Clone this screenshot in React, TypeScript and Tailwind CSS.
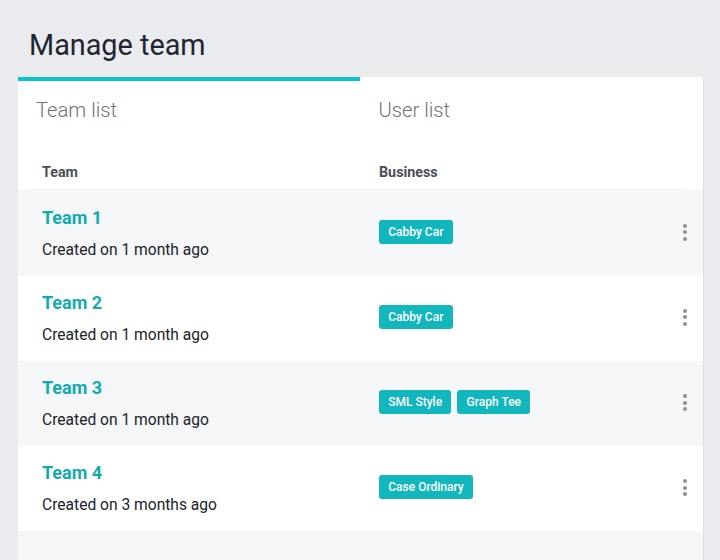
const teams = [
  { name: 'Team 1', created: 'Created on 1 month ago', tags: ['Cabby Car'] },
  { name: 'Team 2', created: 'Created on 1 month ago', tags: ['Cabby Car'] },
  { name: 'Team 3', created: 'Created on 1 month ago', tags: ['SML Style', 'Graph Tee'] },
  { name: 'Team 4', created: 'Created on 3 months ago', tags: ['Case Ordinary'] },
];

function Dots() {
  return (
    <div className="flex flex-col gap-[2.5px] -mt-[1px]">
      <span className="w-1 h-1 rounded-full bg-[#8e9196]" />
      <span className="w-1 h-1 rounded-full bg-[#8e9196]" />
      <span className="w-1 h-1 rounded-full bg-[#8e9196]" />
    </div>
  );
}

export default function App() {
  return (
    <div className="h-[560px] overflow-hidden bg-[#e9ebef] pl-[18px] pr-[17px] font-['Roboto',sans-serif]">
      <h1 className="h-[77px] pt-[26px] pl-[11px] text-[28.8px] leading-[38px] text-[#1f2530]">Manage team</h1>
      <div className="h-[483px] bg-[#f5f6f8] rounded-t-[3px] shadow-[1px_0_1px_rgba(0,0,0,0.06)]">
        <div className="bg-white rounded-t-[3px] h-[113px]">
          <div className="flex h-[73px]">
            <div className="w-[342px] h-[73px] border-t-[4.5px] border-[#0bc2c9] pt-[15px] pl-[18px] text-[20.2px] leading-[28px] font-light text-[#6f7276]">Team list</div>
            <div className="pt-[19px] pl-[18.5px] text-[20.2px] leading-[28px] font-light text-[#6f7276]">User list</div>
          </div>
          <div className="flex h-[40px] ml-[12px] mr-[18px] border-b border-[#f0f1f3] text-[14.3px] font-bold leading-[44px] text-[#4a4e55]">
            <div className="w-[349px] pl-[12px]">Team</div>
            <div>Business</div>
          </div>
        </div>
        {teams.map((team, i) => (
          <div key={team.name} className={`flex items-center h-[85.25px] pl-[24px] pr-[16px] ${i % 2 === 0 ? 'bg-[#f5f6f8]' : 'bg-white'}`}>
            <div className="w-[337px]">
              <div className="-mt-[1px] text-lg leading-[24px] font-bold text-[#13abb0]">{team.name}</div>
              <div className="mt-[10px] -mb-[1px] text-[15.6px] leading-[20px] text-[#20242b]">{team.created}</div>
            </div>
            <div className="flex flex-1 gap-[6px] -mt-[2px]">
              {team.tags.map((tag) => (
                <span key={tag} className="h-[24px] px-[9.25px] rounded-[3px] bg-[#12b7bd] text-xs font-medium leading-[24px] text-white">{tag}</span>
              ))}
            </div>
            <Dots />
          </div>
        ))}
      </div>
    </div>
  );
}
